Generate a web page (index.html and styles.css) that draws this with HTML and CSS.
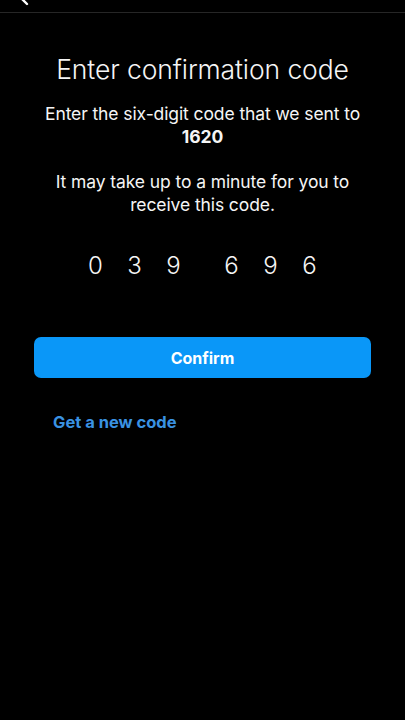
FILE: index.html
```html
<!DOCTYPE html>
<html>
<head>
    <meta name="viewport" content="width=device-width, initial-scale=1.0">
    <link rel="stylesheet" href="styles.css">
</head>
<body>
    <div class="topbar">
        <svg class="back" width="14" height="20" viewBox="0 0 14 20">
            <path d="M11 2 L3 10 L11 18" fill="none" stroke="white" stroke-width="2.4" stroke-linecap="round" stroke-linejoin="round"/>
        </svg>
    </div>
    <div class="content">
        <h1>Enter confirmation code</h1>
        <p class="info">Enter the six-digit code that we sent to<br><b>1620</b></p>
        <p class="info wait">It may take up to a minute for you to<br>receive this code.</p>
        <div class="code">
            <div class="group"><span>0</span><span>3</span><span>9</span></div>
            <div class="group"><span>6</span><span>9</span><span>6</span></div>
        </div>
        <button class="confirm">Confirm</button>
        <a class="newcode" href="#">Get a new code</a>
    </div>
</body>
</html>
```

FILE: styles.css
```css
body {
    margin: 0;
    background-color: #000;
    color: #f5f5f5;
    font-family: Inter, "Noto Sans", sans-serif;
    height: 720px;
    overflow: hidden;
}

.topbar {
    height: 12px;
    border-bottom: 1px solid #262626;
    overflow: hidden;
    padding-left: 16px;
}

.back {
    display: block;
    margin-top: -14px;
}

.content {
    display: flex;
    flex-direction: column;
    align-items: center;
    padding: 0 34px;
}

h1 {
    font-size: 26.5px;
    font-weight: 300;
    margin: 40px 0 0;
    line-height: 32px;
    letter-spacing: -0.1px;
}

.info {
    font-size: 17.5px;
    line-height: 23px;
    text-align: center;
    margin: 17px 0 0;
    letter-spacing: -0.1px;
}

.info b {
    font-weight: 700;
}

.wait {
    margin-top: 22px;
}

.code {
    display: flex;
    gap: 43px;
    margin-top: 35px;
    font-size: 24px;
    font-weight: 300;
    line-height: 30px;
}

.group {
    display: flex;
    gap: 24px;
}

.group span {
    width: 15px;
    text-align: center;
}

.confirm {
    align-self: stretch;
    margin-top: 56px;
    height: 41px;
    border: none;
    border-radius: 7px;
    background-color: #0a97f8;
    color: #fff;
    font-family: Inter, "Noto Sans", sans-serif;
    font-size: 16px;
    font-weight: 700;
}

.newcode {
    align-self: flex-start;
    margin: 34px 0 0 19px;
    color: #3a92e2;
    font-size: 16.5px;
    font-weight: 700;
    text-decoration: none;
}
```
